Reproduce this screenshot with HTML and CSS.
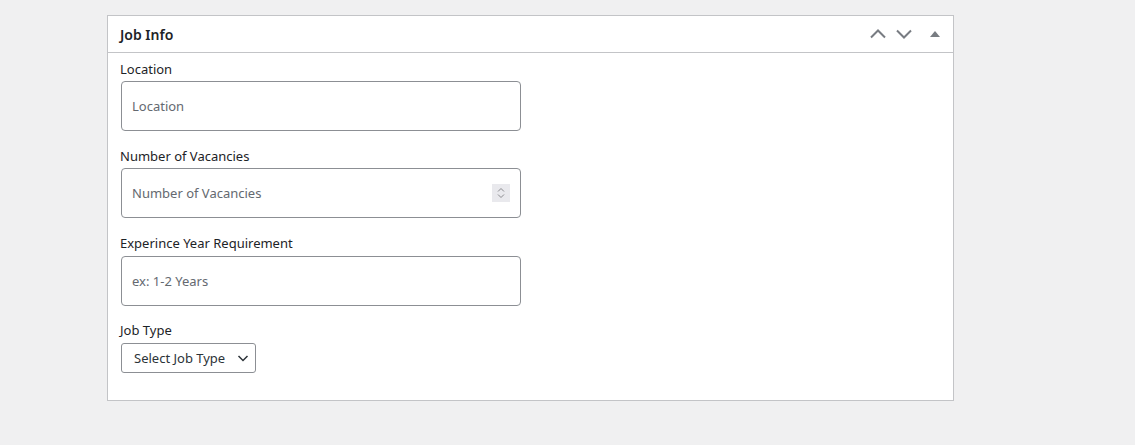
FILE: index.html
```html
<!DOCTYPE html>
<html lang="en">
<head>
    <meta charset="UTF-8">
    <title>Job Info</title>
    <link rel="stylesheet" href="styles.css">
</head>
<body>
    <div class="postbox">
        <div class="postbox-header">
            <h2>Job Info</h2>
            <div class="handle-actions">
                <button class="handle-btn" type="button" aria-label="Move up">
                    <svg width="16" height="16" viewBox="0 0 16 16"><path d="M1 11.5 L8 4.5 L15 11.5" fill="none" stroke="#787c82" stroke-width="2"/></svg>
                </button>
                <button class="handle-btn" type="button" aria-label="Move down">
                    <svg width="16" height="16" viewBox="0 0 16 16"><path d="M1 4.5 L8 11.5 L15 4.5" fill="none" stroke="#787c82" stroke-width="2"/></svg>
                </button>
                <button class="handle-btn toggle" type="button" aria-label="Toggle panel">
                    <svg width="12" height="12" viewBox="0 0 12 12"><path d="M1 9 L6 3 L11 9 Z" fill="#787c82"/></svg>
                </button>
            </div>
        </div>
        <div class="inside">
            <div class="field">
                <label for="location">Location</label>
                <input type="text" id="location" placeholder="Location">
            </div>
            <div class="field">
                <label for="vacancies">Number of Vacancies</label>
                <div class="number-wrap">
                    <input type="number" id="vacancies" placeholder="Number of Vacancies">
                    <span class="spinner">
                        <svg width="18" height="18" viewBox="0 0 18 18"><path d="M6 7.5 L9 4.5 L12 7.5 M6 10.5 L9 13.5 L12 10.5" fill="none" stroke="#8a8a8e" stroke-width="1"/></svg>
                    </span>
                </div>
            </div>
            <div class="field field-exp">
                <label for="experience">Experince Year Requirement</label>
                <input type="text" id="experience" placeholder="ex: 1-2 Years">
            </div>
            <div class="field last">
                <label for="jobtype">Job Type</label>
                <div class="select-wrap">
                    <select id="jobtype">
                        <option>Select Job Type</option>
                        <option>Full Time</option>
                        <option>Part Time</option>
                    </select>
                    <svg class="select-arrow" width="12" height="12" viewBox="0 0 12 12"><path d="M1.5 4 L6 8.5 L10.5 4" fill="none" stroke="#2c3338" stroke-width="1.5"/></svg>
                </div>
            </div>
        </div>
    </div>
</body>
</html>
```

FILE: styles.css
```css
/* page */
body {
    margin: 0;
    padding: 15px 0 0 107px;
    background: #f0f0f1;
    font-family: "Noto Sans", "Open Sans", sans-serif;
    font-size: 13px;
    color: #1d2327;
}

/* metabox */
.postbox {
    width: 845px;
    background: #fff;
    border: 1px solid #c3c4c7;
}

.postbox-header {
    height: 36px;
    display: flex;
    align-items: center;
    justify-content: space-between;
    border-bottom: 1px solid #c3c4c7;
    padding-left: 12px;
}

.postbox-header h2 {
    margin: 0;
    font-size: 14px;
    font-weight: 600;
    color: #1d2327;
}

.handle-actions {
    display: flex;
    align-items: center;
}

.handle-btn {
    width: 26px;
    height: 36px;
    padding: 0;
    border: 0;
    background: none;
    display: flex;
    align-items: center;
    justify-content: center;
}

.handle-btn.toggle {
    width: 36px;
}

/* fields */
.inside {
    padding: 6px 12px 27px;
}

.field {
    display: flex;
    flex-direction: column;
    align-items: flex-start;
    margin-bottom: 15px;
}

.field.last {
    margin-bottom: 0;
}

.field label {
    line-height: 20px;
    margin-bottom: 2px;
}

.field-exp {
    margin-bottom: 14px;
}

.field-exp label,
.field.last label {
    margin-bottom: 3px;
}

input[type="text"],
input[type="number"] {
    width: 400px;
    height: 50px;
    margin: 0 1px;
    padding: 0 10px;
    box-sizing: border-box;
    border: 1px solid #8c8f94;
    border-radius: 4px;
    font-family: inherit;
    font-size: 13px;
    color: #2c3338;
    outline: none;
}

input::placeholder {
    color: #646970;
}

.number-wrap {
    position: relative;
}

input[type="number"]::-webkit-inner-spin-button,
input[type="number"]::-webkit-outer-spin-button {
    -webkit-appearance: none;
    margin: 0;
}

.spinner {
    position: absolute;
    right: 12px;
    top: 16px;
    width: 18px;
    height: 18px;
    background: #e9e9ed;
    display: flex;
}

.select-wrap {
    position: relative;
}

select {
    -webkit-appearance: none;
    appearance: none;
    width: 135px;
    height: 30px;
    margin: 0 1px;
    padding: 0 24px 0 12px;
    border: 1px solid #8c8f94;
    border-radius: 3px;
    background: #fff;
    font-family: inherit;
    font-size: 13px;
    color: #2c3338;
}

.select-arrow {
    position: absolute;
    right: 8px;
    top: 9px;
    pointer-events: none;
}
```
